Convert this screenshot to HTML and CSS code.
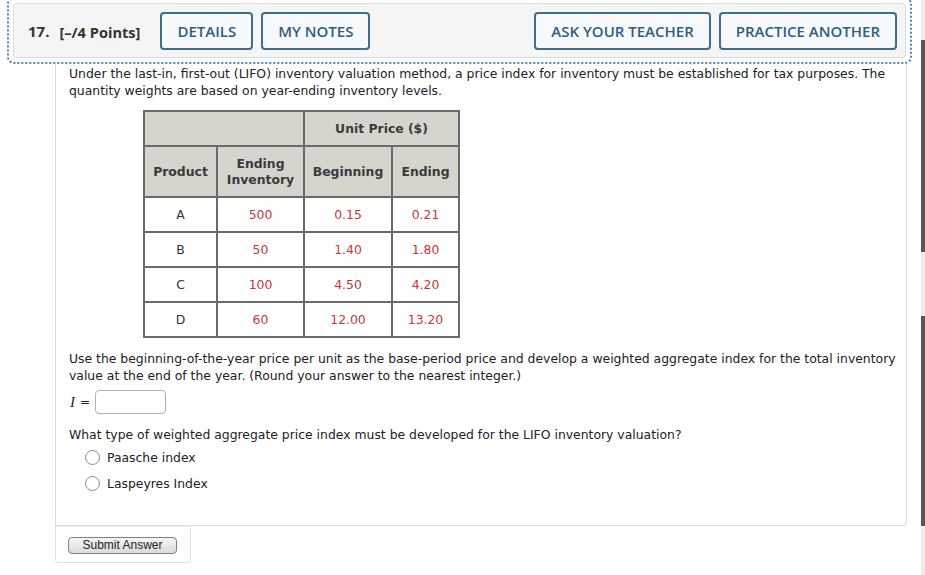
FILE: index.html
```html
<!DOCTYPE html>
<html>
<head>
<meta charset="utf-8">
<link rel="stylesheet" href="styles.css">
</head>
<body>
<div class="page">
  <div class="focus-ring">
    <div class="qhead">
      <span class="qnum">17.</span>
      <span class="qpts">[–/4 Points]</span>
      <button class="hbtn first">DETAILS</button>
      <button class="hbtn">MY NOTES</button>
      <button class="hbtn push">ASK YOUR TEACHER</button>
      <button class="hbtn">PRACTICE ANOTHER</button>
    </div>
  </div>
  <div class="qbody">
    <p class="intro">Under the last-in, first-out (LIFO) inventory valuation method, a price index for inventory must be established for tax purposes. The quantity weights are based on year-ending inventory levels.</p>
    <table class="data">
      <colgroup>
        <col class="c1"><col class="c2"><col class="c3"><col class="c4">
      </colgroup>
      <tr class="h1"><th colspan="2"></th><th colspan="2">Unit Price ($)</th></tr>
      <tr class="h2"><th>Product</th><th>Ending<br>Inventory</th><th>Beginning</th><th>Ending</th></tr>
      <tr><td>A</td><td class="v">500</td><td class="v">0.15</td><td class="v">0.21</td></tr>
      <tr><td>B</td><td class="v">50</td><td class="v">1.40</td><td class="v">1.80</td></tr>
      <tr><td>C</td><td class="v">100</td><td class="v">4.50</td><td class="v">4.20</td></tr>
      <tr><td>D</td><td class="v">60</td><td class="v">12.00</td><td class="v">13.20</td></tr>
    </table>
    <p class="part">Use the beginning-of-the-year price per unit as the base-period price and develop a weighted aggregate index for the total inventory value at the end of the year. (Round your answer to the nearest integer.)</p>
    <div class="answer"><span class="ivar">I</span><span class="eq">=</span><span class="field"></span></div>
    <p class="part q2">What type of weighted aggregate price index must be developed for the LIFO inventory valuation?</p>
    <div class="opts">
      <label class="opt"><span class="radio"></span>Paasche index</label>
      <label class="opt"><span class="radio"></span>Laspeyres Index</label>
    </div>
  </div>
  <div class="submit-box"><button class="submit">Submit Answer</button></div>
</div>
<div class="scroll"><div class="thumb t1"></div><div class="gap"></div><div class="thumb t2"></div></div>
</body>
</html>
```
FILE: styles.css
```css
html, body {
  margin: 0;
  padding: 0;
  background: #fff;
  overflow: hidden;
}
body {
  font-family: "DejaVu Sans", Verdana, sans-serif;
  font-size: 12.4px;
  color: #222;
  width: 925px;
  height: 575px;
}
.page {
  width: 925px;
}
.focus-ring {
  margin: -3px 0 0 7px;
  width: 893px;
  padding: 4px;
  border: 2px dotted #4f86c6;
  border-radius: 7px;
}
.qhead {
  height: 52px;
  background: #f5f5f5;
  border: 1px solid #dcdcdc;
  border-radius: 4px;
  display: flex;
  align-items: center;
  padding: 1px 8px 0 14px;
}
.qnum {
  font-family: "Open Sans", sans-serif;
  font-weight: 700;
  font-size: 15px;
  color: #333;
  margin-right: 10px;
}
.qpts {
  font-family: "Open Sans", sans-serif;
  font-weight: 700;
  font-size: 14.6px;
  color: #333;
  margin-right: 20px;
  margin-top: 2px;
}
.hbtn {
  height: 38px;
  padding: 0 15px;
  margin-right: 8px;
  border: 2px solid #3e6d91;
  border-radius: 4px;
  background: #f8f9fa;
  color: #2d5e84;
  font-family: "Open Sans", sans-serif;
  font-weight: 600;
  font-size: 15px;
}
.hbtn:last-child { margin-right: 0; }
.hbtn.push { margin-left: auto; }
.qbody {
  margin-left: 55px;
  width: 837px;
  height: 460px;
  border: 1px solid #dcdcdc;
  border-top: none;
  border-radius: 0 0 4px 0;
  padding: 1px 0 0 13px;
  line-height: 17px;
}
.intro {
  margin: 0;
}
table.data {
  margin: 11px 0 0 74px;
  border-collapse: collapse;
  table-layout: fixed;
  width: 315px;
  border: 2px solid #666;
  font-size: 12.4px;
}
col.c1 { width: 73px; }
col.c2 { width: 87px; }
col.c3 { width: 88px; }
col.c4 { width: 67px; }
table.data th, table.data td {
  border: 2px solid #6a6a6a;
  text-align: center;
  padding: 0;
}
table.data th {
  background: #d7d4cd;
  color: #3a3a3a;
  font-weight: bold;
  line-height: 16px;
}
tr.h1 th { height: 33px; }
tr.h2 th { height: 49px; }
table.data td {
  height: 33px;
  color: #333;
}
table.data td.v { color: #c8373a; }
.part {
  margin: 12px 0 0 0;
}
.answer {
  display: flex;
  align-items: center;
  margin-top: 6px;
  height: 24px;
}
.ivar {
  font-family: "Liberation Serif", serif;
  font-style: italic;
  font-size: 15px;
  margin: 0 5px 0 1px;
}
.eq { margin-right: 5px; font-size: 12px; }
.field {
  width: 69px;
  height: 22px;
  border: 1px solid #b0b0b0;
  border-radius: 4px;
  background: #fff;
}
.part.q2 { margin-top: 12px; }
.opts {
  margin-left: 16px;
  margin-top: 6px;
  display: flex;
  flex-direction: column;
  gap: 9px;
}
.opt {
  display: flex;
  align-items: center;
  height: 17px;
}
.radio {
  width: 13px;
  height: 13px;
  border: 1px solid #8a8a8a;
  border-radius: 50%;
  margin-right: 7px;
  background: #fff;
}
.submit-box {
  margin-left: 55px;
  width: 136px;
  height: 37px;
  border: 1px solid #e2e2e2;
  border-top: 1px solid #f0f0f0;
  border-radius: 0 0 4px 4px;
  padding: 0 0 0 12px;
  display: flex;
  align-items: center;
  box-sizing: border-box;
}
.submit {
  width: 109px;
  height: 17px;
  padding: 0;
  margin-top: 1px;
  border: 1px solid #7f7f7f;
  border-radius: 4px;
  background: linear-gradient(#f6f6f6, #dadada);
  font-family: "Liberation Sans", Arial, sans-serif;
  font-size: 12px;
  color: #222;
  line-height: 15px;
}
.scroll {
  position: absolute;
  top: 0;
  right: 0;
  width: 4px;
  height: 575px;
  background: #ececec;
}
.thumb { background: #575757; width: 4px; }
.t1 { margin-top: 40px; height: 212px; }
.gap { height: 64px; }
.t2 { height: 210px; }
```
